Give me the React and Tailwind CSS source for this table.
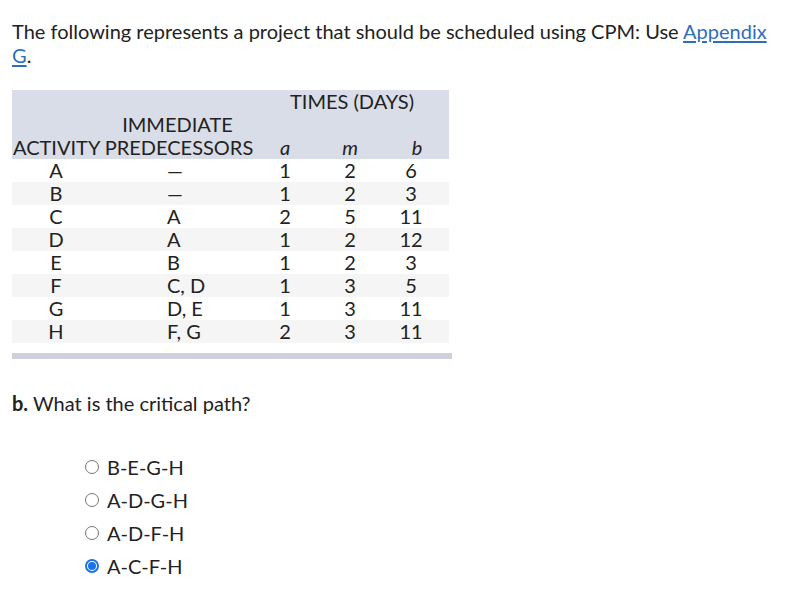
import React from 'react';

const rows = [
    { act: 'A', pre: '—', a: 1, m: 2, b: 6 },
    { act: 'B', pre: '—', a: 1, m: 2, b: 3 },
    { act: 'C', pre: 'A', a: 2, m: 5, b: 11 },
    { act: 'D', pre: 'A', a: 1, m: 2, b: 12 },
    { act: 'E', pre: 'B', a: 1, m: 2, b: 3 },
    { act: 'F', pre: 'C, D', a: 1, m: 3, b: 5 },
    { act: 'G', pre: 'D, E', a: 1, m: 3, b: 11 },
    { act: 'H', pre: 'F, G', a: 2, m: 3, b: 11 },
];

const options = ['B-E-G-H', 'A-D-G-H', 'A-D-F-H', 'A-C-F-H'];

function Radio({ checked }) {
    if (checked) {
        return (
            <span className="w-[14px] h-[14px] rounded-full border-2 border-[#1a73e8] flex items-center justify-center bg-white">
                <span className="w-[8px] h-[8px] rounded-full bg-[#1a73e8]"></span>
            </span>
        );
    }
    return <span className="w-[14px] h-[14px] rounded-full border border-[#767676] bg-white"></span>;
}

export default function App() {
    const cell = "leading-[23px] h-[23px] p-0";

    return (
        <div className="w-[785px] h-[596px] bg-white text-[#222] font-['Lato',sans-serif] text-[20px] px-3 pt-[19px]">
            <p className="leading-[24px]">
                The following represents a project that should be scheduled using CPM: Use{' '}
                <a className="text-[#2e6ebd] underline underline-offset-2">Appendix G</a>.
            </p>

            {/* tabla de tiempos */}
            <table className="mt-[23px] w-[437px] table-fixed border-collapse">
                <colgroup>
                    <col className="w-[88px]" />
                    <col className="w-[155px]" />
                    <col className="w-[60px]" />
                    <col className="w-[70px]" />
                    <col className="w-[64px]" />
                </colgroup>
                <thead className="bg-[#d9dde7]">
                    <tr>
                        <th colSpan={2} className={cell}></th>
                        <th colSpan={3} className={`${cell} font-normal text-center`}>TIMES (DAYS)</th>
                    </tr>
                    <tr>
                        <th className={cell}></th>
                        <th className={`${cell} font-normal text-center`}>IMMEDIATE</th>
                        <th colSpan={3} className={cell}></th>
                    </tr>
                    <tr>
                        <th colSpan={2} className={`${cell} font-normal text-left pl-[1px] whitespace-nowrap`}>ACTIVITY PREDECESSORS</th>
                        <th className={`${cell} font-normal italic text-center`}>a</th>
                        <th className={`${cell} font-normal italic text-center`}>m</th>
                        <th className={`${cell} font-normal italic text-center`}>b</th>
                    </tr>
                </thead>
                <tbody>
                    {rows.map((r, i) => (
                        <tr key={r.act} className={i % 2 === 1 ? 'bg-[#f5f5f5]' : 'bg-white'}>
                            <td className={`${cell} text-center`}>{r.act}</td>
                            <td className={`${cell} pl-[67px]`}>{r.pre}</td>
                            <td className={`${cell} text-center`}>{r.a}</td>
                            <td className={`${cell} text-center`}>{r.m}</td>
                            <td className={`${cell} text-center pr-[12px]`}>{r.b}</td>
                        </tr>
                    ))}
                </tbody>
            </table>
            <div className="mt-[10px] w-[440px] h-[6px] bg-[#ccd1dc]"></div>

            <p className="mt-[32px] leading-[24px]">
                <span className="font-bold">b.</span> What is the critical path?
            </p>

            <div className="mt-[40px] ml-[73px] flex flex-col gap-[9px]">
                {options.map((o, i) => (
                    <label key={o} className="flex items-center gap-[8px] h-[24px] leading-[24px]">
                        <Radio checked={i === 3} />
                        <span>{o}</span>
                    </label>
                ))}
            </div>
        </div>
    );
}
